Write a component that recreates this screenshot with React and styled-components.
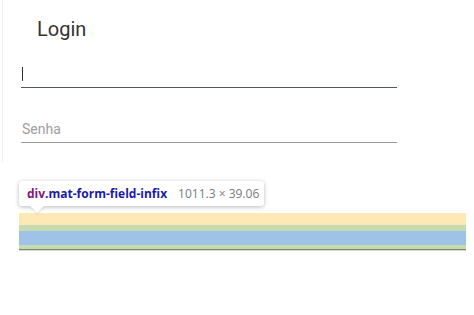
import React from 'react';
import styled, { createGlobalStyle } from 'styled-components';

const GlobalStyle = createGlobalStyle`
  html, body {
    margin: 0;
    padding: 0;
    background: #ffffff;
  }
  body {
    font-family: Roboto, "Liberation Sans", Arial, sans-serif;
    width: 474px;
    height: 315px;
    overflow: hidden;
  }
`;

const Page = styled.div`
  position: relative;
  width: 474px;
  height: 315px;
`;

const Card = styled.div`
  margin-left: 2px;
  height: 162px;
  box-sizing: border-box;
  padding: 19px 0 0 18px;
  border-left: 1px solid #f2f2f2;
  display: flex;
  flex-direction: column;
`;

const Title = styled.h2`
  margin: 0 0 0 16px;
  font-size: 20px;
  font-weight: 400;
  line-height: 20px;
  color: #333333;
`;

const Field = styled.div`
  width: 376px;
  height: ${p => p.$height}px;
  margin-top: ${p => p.$top}px;
  box-sizing: border-box;
  border-bottom: 1px solid ${p => (p.$focused ? '#4e5663' : '#9a9a9a')};
  display: flex;
  align-items: flex-end;
  padding-bottom: ${p => p.$pad}px;
`;

const Caret = styled.span`
  display: block;
  width: 1px;
  height: 14px;
  margin-left: 1px;
  background: #333;
`;

const Placeholder = styled.span`
  font-size: 14px;
  line-height: 14px;
  color: #9e9e9e;
  margin-left: 1px;
`;

const Highlight = styled.div`
  margin: 51px 0 0 19px;
  width: 447px;
  display: flex;
  flex-direction: column;
`;

const Band = styled.div`
  height: ${p => p.$h}px;
  background: ${p => p.$c};
`;

const Tooltip = styled.div`
  position: absolute;
  left: 19px;
  top: 181px;
  width: 245px;
  height: 25px;
  box-sizing: border-box;
  padding: 0 0 0 8px;
  background: #ffffff;
  border-radius: 3px;
  box-shadow: 0 1px 4px rgba(0, 0, 0, 0.28);
  display: flex;
  align-items: center;
  font-family: "Open Sans", "Noto Sans", sans-serif;
  font-size: 12px;
  white-space: nowrap;

  &::after {
    content: '';
    position: absolute;
    left: 11px;
    bottom: -7px;
    width: 0;
    height: 0;
    border-left: 7px solid transparent;
    border-right: 7px solid transparent;
    border-top: 7px solid #ffffff;
    filter: drop-shadow(0 1px 1px rgba(0, 0, 0, 0.15));
  }
`;

const Tag = styled.span`
  color: #881280;
  font-weight: 700;
`;

const ClassName = styled.span`
  color: #1a1aa6;
  font-weight: 700;
`;

const Size = styled.span`
  color: #7a7a7a;
  margin-left: 11px;
  font-size: 12px;
`;

const bands = [
  { h: 12, c: '#fde9b6' },
  { h: 6, c: '#c6dcb0' },
  { h: 14, c: '#9fc3e7' },
  { h: 4, c: '#c6dcb0' },
  { h: 1, c: '#6f8a6c' },
  { h: 1, c: '#d4e5c4' },
];

const App = () => {
  return (
    <Page>
      <GlobalStyle />
      <Card>
        <Title>Login</Title>
        <Field $height={50} $top={-1} $pad={6} $focused>
          <Caret />
        </Field>
        <Field $height={55} $top={0} $pad={6}>
          <Placeholder>Senha</Placeholder>
        </Field>
      </Card>
      <Highlight>
        {bands.map((b, i) => (
          <Band key={i} $h={b.h} $c={b.c} />
        ))}
      </Highlight>
      <Tooltip>
        <Tag>div</Tag>
        <ClassName>.mat-form-field-infix</ClassName>
        <Size>1011.3 × 39.06</Size>
      </Tooltip>
    </Page>
  );
};

export default App;
